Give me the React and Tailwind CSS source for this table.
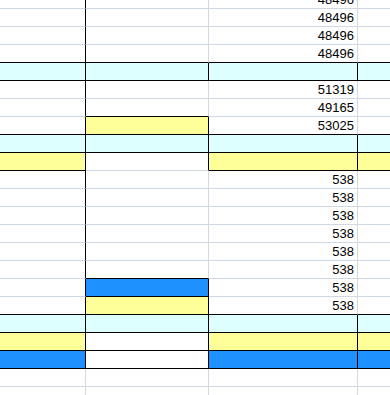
const GRID = "#d0d7e5";
const CYAN = "bg-[#ddffff]";
const YELLOW = "bg-[#ffff99]";
const BLUE = "bg-[#1e90ff]";

// kind: n = plain row, c = cyan band, y = yellow band, b = blue band
const rows = [
  { kind: "n", value: "48496" },
  { kind: "n", value: "48496" },
  { kind: "n", value: "48496" },
  { kind: "n", value: "48496" },
  { kind: "c" },
  { kind: "n", value: "51319" },
  { kind: "n", value: "49165" },
  { kind: "n", value: "53025", b: "y" },
  { kind: "c" },
  { kind: "y" },
  { kind: "n", value: "538" },
  { kind: "n", value: "538" },
  { kind: "n", value: "538" },
  { kind: "n", value: "538" },
  { kind: "n", value: "538" },
  { kind: "n", value: "538" },
  { kind: "n", value: "538", b: "b" },
  { kind: "n", value: "538", b: "y" },
  { kind: "c" },
  { kind: "y", bBottom: true },
  { kind: "b", bBottom: true },
  { kind: "n" },
  { kind: "n" },
];

const widths = ["w-[86px]", "w-[123px]", "w-[149px]", "w-[60px]"];

const fillFor = (row, col) => {
  if (row.kind === "c") return CYAN;
  if (row.kind === "y") return col === 1 ? "bg-white" : YELLOW;
  if (row.kind === "b") return col === 1 ? "bg-white" : BLUE;
  if (col === 1 && row.b === "y") return YELLOW;
  if (col === 1 && row.b === "b") return BLUE;
  return "bg-white";
};

const boxed = (r, c) => {
  const row = rows[r];
  if (!row) return false;
  if (row.kind === "c") return true;
  if (row.kind === "y" || row.kind === "b") return c !== 1;
  return c === 1 && !!row.b;
};

export default function App() {
  return (
    <div className="h-[395px] w-[390px] overflow-hidden bg-white">
      <div className="mt-[-9px] flex flex-col" style={{ fontFamily: '"Liberation Sans", Arial, sans-serif' }}>
        {rows.map((row, r) => (
          <div key={r} className="flex h-[18px] shrink-0">
            {widths.map((w, c) => {
              const bottomBlack = boxed(r, c) || boxed(r + 1, c) || (c === 1 && row.bBottom);
              const rightBlack = boxed(r, c) || boxed(r, c + 1) || (c === 0 && r <= 20);
              return (
                <div
                  key={c}
                  className={`${w} ${fillFor(row, c)} shrink-0 border-b border-r pr-[3px] text-right text-[13px] leading-[17px] text-black`}
                  style={{
                    borderBottomColor: bottomBlack ? "#000" : GRID,
                    borderRightColor: rightBlack ? "#000" : GRID,
                  }}
                >
                  {c === 2 ? row.value : ""}
                </div>
              );
            })}
          </div>
        ))}
      </div>
    </div>
  );
}
